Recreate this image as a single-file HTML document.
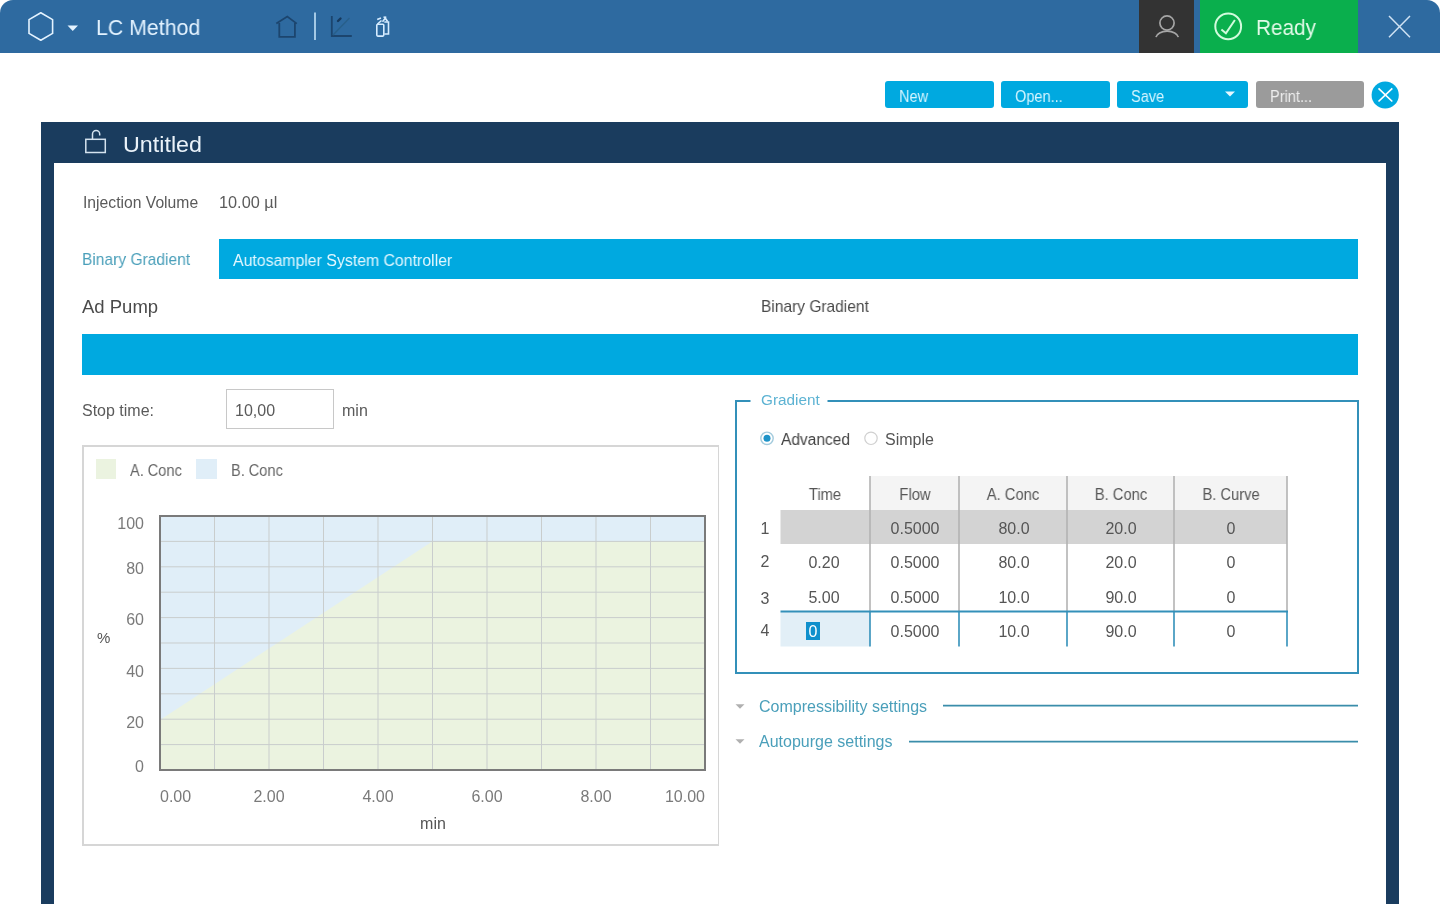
<!DOCTYPE html>
<html><head><meta charset="utf-8">
<style>
*{box-sizing:border-box;margin:0;padding:0}
html,body{width:1440px;height:904px;overflow:hidden;background:#fff;font-family:"Liberation Sans",sans-serif;color:#555555}
.a{position:absolute;white-space:nowrap;will-change:transform}
</style></head><body>
<div class="a" style="left:0;top:0;width:1440px;height:53px;background:#2e6aa0;border-radius:13px 13px 0 0"></div>
<svg class="a" style="left:0;top:0" width="1440" height="53" viewBox="0 0 1440 53"><path d="M40.8 12.8 L52.6 19.6 L52.6 33.4 L40.8 40.2 L29 33.4 L29 19.6 Z" fill="none" stroke="#e4f3ff" stroke-width="1.6" stroke-linejoin="round"/><path d="M67.5 25.5 H78 L72.75 31 Z" fill="#e4f3ff"/><path d="M276.3 23.6 L287.3 16.6 L296.8 23.6 M279.3 22.9 V36.8 H294.9 V22.9" fill="none" stroke="#1c456e" stroke-width="1.8"/><line x1="315" y1="12.5" x2="315" y2="40" stroke="#cdeafc" stroke-width="1.5"/><path d="M331.8 16 V36 H351.8" fill="none" stroke="#1c456e" stroke-width="1.8"/><path d="M333 35 L349.5 18" fill="none" stroke="#285f8a" stroke-width="1.4"/><path d="M338 21 L340.5 18.5" fill="none" stroke="#173a5e" stroke-width="2.4" stroke-linecap="round"/><path d="M384.3 22 H388.5 V34 H384.3" fill="none" stroke="#d6ecff" stroke-width="1.6"/><path d="M382.5 21.8 L385.3 18.2 L387.6 21.5" fill="none" stroke="#d6ecff" stroke-width="1.6"/><path d="M383.5 17.2 L386.3 17.2" fill="none" stroke="#d6ecff" stroke-width="1.6"/><rect x="376.8" y="24.3" width="7" height="11.8" rx="1" fill="none" stroke="#d6ecff" stroke-width="1.6"/><path d="M377.5 24 L381.5 20.5 M377.2 19.5 L381 18" fill="none" stroke="#d6ecff" stroke-width="1.6"/></svg>
<div class="a" style="left:95.80px;top:15.18px;font-size:22px;line-height:26.40px;color:#e4f3ff;transform:scaleX(0.968);transform-origin:0 0;">LC Method</div>
<div class="a" style="left:1139px;top:0;width:55px;height:53px;background:#333333"></div>
<div class="a" style="left:1200px;top:0;width:158px;height:53px;background:#0aaf4d"></div>
<svg class="a" style="left:1100px;top:0" width="340" height="53" viewBox="1100 0 340 53"><circle cx="1167" cy="23" r="7.1" fill="none" stroke="#a6a6a6" stroke-width="1.7"/><path d="M1156 37.2 A11.2 6.6 0 0 1 1178.3 37.2" fill="none" stroke="#a6a6a6" stroke-width="1.7"/><circle cx="1228.2" cy="26.4" r="12.9" fill="none" stroke="#d2fbdd" stroke-width="2"/><path d="M1221.4 29.6 L1225.9 33.3 L1234.9 20" fill="none" stroke="#d2fbdd" stroke-width="2"/><path d="M1389 16 L1410 37.3 M1410 16 L1389 37.3" stroke="#cfe2f3" stroke-width="1.5"/></svg>
<div class="a" style="left:1256.00px;top:13.92px;font-size:22.8px;line-height:27.36px;color:#e2fae8;transform:scaleX(0.91);transform-origin:0 0;">Ready</div>
<div class="a" style="left:885px;top:81px;width:109px;height:27px;border-radius:3px;background:#00a9e0"></div>
<div class="a" style="left:899.00px;top:86.86px;font-size:16px;line-height:19.20px;color:#d5f5ff;transform:scaleX(0.91);transform-origin:0 0;">New</div>
<div class="a" style="left:1001px;top:81px;width:109px;height:27px;border-radius:3px;background:#00a9e0"></div>
<div class="a" style="left:1015.00px;top:86.86px;font-size:16px;line-height:19.20px;color:#d5f5ff;transform:scaleX(0.91);transform-origin:0 0;">Open...</div>
<div class="a" style="left:1117px;top:81px;width:131px;height:27px;border-radius:3px;background:#00a9e0"></div>
<div class="a" style="left:1131.00px;top:86.86px;font-size:16px;line-height:19.20px;color:#d5f5ff;transform:scaleX(0.91);transform-origin:0 0;">Save</div>
<div class="a" style="left:1256px;top:81px;width:108px;height:27px;border-radius:3px;background:#9b9b9b"></div>
<div class="a" style="left:1270.00px;top:86.86px;font-size:16px;line-height:19.20px;color:#eeeeee;transform:scaleX(0.91);transform-origin:0 0;">Print...</div>
<svg class="a" style="left:1100px;top:70px" width="340" height="50" viewBox="1100 70 340 50"><path d="M1225 91.5 H1235 L1230 96.5 Z" fill="#e6f8ff"/><circle cx="1385.2" cy="95" r="13.6" fill="#00a9e0"/><path d="M1378.5 88.3 L1392.3 101.5 M1392.3 88.3 L1378.5 101.5" stroke="#fff" stroke-width="1.7"/></svg>
<div class="a" style="left:41px;top:122px;width:1358px;height:790px;background:#1a3c5e"></div>
<div class="a" style="left:54px;top:163px;width:1332px;height:750px;background:#fff"></div>
<svg class="a" style="left:80px;top:125px" width="30" height="32" viewBox="80 125 30 32"><rect x="85.8" y="139.3" width="19.5" height="13.2" fill="none" stroke="#d5e3ef" stroke-width="1.5"/><path d="M92.5 139 V134 A3.6 3.6 0 0 1 99.7 134 V135.5" fill="none" stroke="#d5e3ef" stroke-width="1.5"/></svg>
<div class="a" style="left:122.50px;top:130.50px;font-size:22.5px;line-height:27.00px;color:#eaf2f9;transform:scaleX(1.035);transform-origin:0 0;">Untitled</div>
<div class="a" style="left:82.50px;top:193.64px;font-size:15.7px;line-height:18.84px;color:#5a5a5a;transform-origin:0 0;">Injection Volume</div>
<div class="a" style="left:218.50px;top:193.07px;font-size:16.3px;line-height:19.56px;color:#5a5a5a;transform-origin:0 0;">10.00 µl</div>
<div class="a" style="left:82.30px;top:249.71px;font-size:17px;line-height:20.40px;color:#4a9fba;transform:scaleX(0.915);transform-origin:0 0;">Binary Gradient</div>
<div class="a" style="left:219px;top:239px;width:1139px;height:40px;background:#00a9e0"></div>
<div class="a" style="left:232.50px;top:251.06px;font-size:16px;line-height:19.20px;color:#e4f8ff;transform:scaleX(0.99);transform-origin:0 0;">Autosampler System Controller</div>
<div class="a" style="left:82.00px;top:295.99px;font-size:18.5px;line-height:22.20px;color:#4a4a4a;transform-origin:0 0;">Ad Pump</div>
<div class="a" style="left:760.50px;top:297.49px;font-size:16.6px;line-height:19.92px;color:#4a4a4a;transform:scaleX(0.935);transform-origin:0 0;">Binary Gradient</div>
<div class="a" style="left:82px;top:334px;width:1276px;height:41px;background:#00a9e0"></div>
<div class="a" style="left:82.00px;top:400.86px;font-size:16px;line-height:19.20px;color:#5a5a5a;transform-origin:0 0;">Stop time:</div>
<div class="a" style="left:226px;top:389px;width:108px;height:40px;border:1px solid #c8c8c8"></div>
<div class="a" style="left:235.00px;top:400.86px;font-size:16px;line-height:19.20px;color:#5a5a5a;transform-origin:0 0;">10,00</div>
<div class="a" style="left:342.00px;top:400.86px;font-size:16px;line-height:19.20px;color:#5a5a5a;transform-origin:0 0;">min</div>
<div class="a" style="left:82px;top:445px;width:637px;height:401px;border:2px solid #d6d6d6;border-width:2px 1px 2px 2px"></div>
<svg class="a" style="left:0;top:0" width="1440" height="904" viewBox="0 0 1440 904">
<rect x="160" y="516" width="545" height="254" fill="#e0eef8"/>
<polygon points="160,720 433,541 705,541 705,770 160,770" fill="#ebf3e0"/>
<line x1="214.5" y1="516" x2="214.5" y2="770" stroke="#c9cdcd" stroke-width="1"/>
<line x1="269.0" y1="516" x2="269.0" y2="770" stroke="#c9cdcd" stroke-width="1"/>
<line x1="323.5" y1="516" x2="323.5" y2="770" stroke="#c9cdcd" stroke-width="1"/>
<line x1="378.0" y1="516" x2="378.0" y2="770" stroke="#c9cdcd" stroke-width="1"/>
<line x1="432.5" y1="516" x2="432.5" y2="770" stroke="#c9cdcd" stroke-width="1"/>
<line x1="487.0" y1="516" x2="487.0" y2="770" stroke="#c9cdcd" stroke-width="1"/>
<line x1="541.5" y1="516" x2="541.5" y2="770" stroke="#c9cdcd" stroke-width="1"/>
<line x1="596.0" y1="516" x2="596.0" y2="770" stroke="#c9cdcd" stroke-width="1"/>
<line x1="650.5" y1="516" x2="650.5" y2="770" stroke="#c9cdcd" stroke-width="1"/>
<line x1="160" y1="541.4" x2="705" y2="541.4" stroke="#c9cdcd" stroke-width="1"/>
<line x1="160" y1="566.8" x2="705" y2="566.8" stroke="#c9cdcd" stroke-width="1"/>
<line x1="160" y1="592.2" x2="705" y2="592.2" stroke="#c9cdcd" stroke-width="1"/>
<line x1="160" y1="617.6" x2="705" y2="617.6" stroke="#c9cdcd" stroke-width="1"/>
<line x1="160" y1="643.0" x2="705" y2="643.0" stroke="#c9cdcd" stroke-width="1"/>
<line x1="160" y1="668.4" x2="705" y2="668.4" stroke="#c9cdcd" stroke-width="1"/>
<line x1="160" y1="693.8" x2="705" y2="693.8" stroke="#c9cdcd" stroke-width="1"/>
<line x1="160" y1="719.2" x2="705" y2="719.2" stroke="#c9cdcd" stroke-width="1"/>
<line x1="160" y1="744.6" x2="705" y2="744.6" stroke="#c9cdcd" stroke-width="1"/>
<rect x="160" y="516" width="545" height="254" fill="none" stroke="#7a7a7a" stroke-width="2"/>
<rect x="96" y="459" width="20" height="20" fill="#ebf3e0"/>
<rect x="196" y="459" width="21" height="20" fill="#e0eef8"/>
<path d="M750.5 401 H736 V673 H1358 V401 H827.5" fill="none" stroke="#3390b9" stroke-width="2"/>
<circle cx="767" cy="438.3" r="6.2" fill="#fff" stroke="#a3cbdd" stroke-width="1.4"/>
<circle cx="767" cy="438.3" r="3.5" fill="#1d93c8"/>
<circle cx="871" cy="438.3" r="6.2" fill="#fff" stroke="#d0d0d0" stroke-width="1.2"/>
<rect x="870" y="476" width="417" height="34" fill="#f4f4f4"/>
<rect x="780.5" y="510" width="506.5" height="34" fill="#d3d3d3"/>
<rect x="780.5" y="612" width="89.5" height="34.5" fill="#e2eff7"/>
<line x1="870" y1="476" x2="870" y2="611" stroke="#b3b3b3" stroke-width="1.6"/>
<line x1="870" y1="611" x2="870" y2="646.5" stroke="#3390b9" stroke-width="1.6"/>
<line x1="959" y1="476" x2="959" y2="611" stroke="#b3b3b3" stroke-width="1.6"/>
<line x1="959" y1="611" x2="959" y2="646.5" stroke="#3390b9" stroke-width="1.6"/>
<line x1="1067" y1="476" x2="1067" y2="611" stroke="#b3b3b3" stroke-width="1.6"/>
<line x1="1067" y1="611" x2="1067" y2="646.5" stroke="#3390b9" stroke-width="1.6"/>
<line x1="1174" y1="476" x2="1174" y2="611" stroke="#b3b3b3" stroke-width="1.6"/>
<line x1="1174" y1="611" x2="1174" y2="646.5" stroke="#3390b9" stroke-width="1.6"/>
<line x1="1287" y1="476" x2="1287" y2="611" stroke="#b3b3b3" stroke-width="1.6"/>
<line x1="1287" y1="611" x2="1287" y2="646.5" stroke="#3390b9" stroke-width="1.6"/>
<line x1="780.5" y1="611.5" x2="1288" y2="611.5" stroke="#3390b9" stroke-width="1.8"/>
<rect x="806" y="622" width="14" height="18" fill="#1090cc"/>
<path d="M735.5 704.2 H744.5 L740 708.7 Z" fill="#b0b0b0"/>
<path d="M735.5 739.2 H744.5 L740 743.7 Z" fill="#b0b0b0"/>
<line x1="943" y1="705.6" x2="1358" y2="705.6" stroke="#3a8daa" stroke-width="1.7"/>
<line x1="909" y1="741.6" x2="1358" y2="741.6" stroke="#3a8daa" stroke-width="1.7"/>
</svg>
<div class="a" style="left:130.00px;top:460.86px;font-size:16px;line-height:19.20px;color:#666;transform:scaleX(0.91);transform-origin:0 0;">A. Conc</div>
<div class="a" style="left:231.00px;top:460.86px;font-size:16px;line-height:19.20px;color:#666;transform:scaleX(0.91);transform-origin:0 0;">B. Conc</div>
<div class="a" style="left:-456.00px;width:600px;text-align:right;top:514.36px;font-size:16px;line-height:19.20px;color:#7a7a7a;transform-origin:100% 0;">100</div>
<div class="a" style="left:-456.00px;width:600px;text-align:right;top:558.86px;font-size:16px;line-height:19.20px;color:#7a7a7a;transform-origin:100% 0;">80</div>
<div class="a" style="left:-456.00px;width:600px;text-align:right;top:610.36px;font-size:16px;line-height:19.20px;color:#7a7a7a;transform-origin:100% 0;">60</div>
<div class="a" style="left:-456.00px;width:600px;text-align:right;top:661.86px;font-size:16px;line-height:19.20px;color:#7a7a7a;transform-origin:100% 0;">40</div>
<div class="a" style="left:-456.00px;width:600px;text-align:right;top:712.86px;font-size:16px;line-height:19.20px;color:#7a7a7a;transform-origin:100% 0;">20</div>
<div class="a" style="left:-456.00px;width:600px;text-align:right;top:756.86px;font-size:16px;line-height:19.20px;color:#7a7a7a;transform-origin:100% 0;">0</div>
<div class="a" style="left:97.00px;top:629.30px;font-size:15px;line-height:18.00px;color:#555;transform-origin:0 0;">%</div>
<div class="a" style="left:159.50px;top:786.86px;font-size:16px;line-height:19.20px;color:#7a7a7a;transform-origin:0 0;">0.00</div>
<div class="a" style="left:-31.50px;width:600px;text-align:center;top:786.86px;font-size:16px;line-height:19.20px;color:#7a7a7a;transform-origin:50% 0;">2.00</div>
<div class="a" style="left:77.50px;width:600px;text-align:center;top:786.86px;font-size:16px;line-height:19.20px;color:#7a7a7a;transform-origin:50% 0;">4.00</div>
<div class="a" style="left:187.00px;width:600px;text-align:center;top:786.86px;font-size:16px;line-height:19.20px;color:#7a7a7a;transform-origin:50% 0;">6.00</div>
<div class="a" style="left:296.00px;width:600px;text-align:center;top:786.86px;font-size:16px;line-height:19.20px;color:#7a7a7a;transform-origin:50% 0;">8.00</div>
<div class="a" style="left:105.00px;width:600px;text-align:right;top:786.86px;font-size:16px;line-height:19.20px;color:#7a7a7a;transform-origin:100% 0;">10.00</div>
<div class="a" style="left:132.50px;width:600px;text-align:center;top:814.36px;font-size:16px;line-height:19.20px;color:#555;transform-origin:50% 0;">min</div>
<div class="a" style="left:760.80px;top:391.32px;font-size:15.3px;line-height:18.36px;color:#5db3d3;transform-origin:0 0;">Gradient</div>
<div class="a" style="left:781.00px;top:430.46px;font-size:16px;line-height:19.20px;color:#444;transform:scaleX(0.97);transform-origin:0 0;">Advanced</div>
<div class="a" style="left:885.00px;top:430.46px;font-size:16px;line-height:19.20px;color:#555;transform-origin:0 0;">Simple</div>
<div class="a" style="left:525.00px;width:600px;text-align:center;top:484.86px;font-size:16px;line-height:19.20px;color:#555;transform:scaleX(0.92);transform-origin:50% 0;">Time</div>
<div class="a" style="left:615.00px;width:600px;text-align:center;top:484.86px;font-size:16px;line-height:19.20px;color:#555;transform:scaleX(0.92);transform-origin:50% 0;">Flow</div>
<div class="a" style="left:713.00px;width:600px;text-align:center;top:484.86px;font-size:16px;line-height:19.20px;color:#555;transform:scaleX(0.92);transform-origin:50% 0;">A. Conc</div>
<div class="a" style="left:820.50px;width:600px;text-align:center;top:484.86px;font-size:16px;line-height:19.20px;color:#555;transform:scaleX(0.92);transform-origin:50% 0;">B. Conc</div>
<div class="a" style="left:931.00px;width:600px;text-align:center;top:484.86px;font-size:16px;line-height:19.20px;color:#555;transform:scaleX(0.92);transform-origin:50% 0;">B. Curve</div>
<div class="a" style="left:464.50px;width:600px;text-align:center;top:518.86px;font-size:16px;line-height:19.20px;color:#555;transform-origin:50% 0;">1</div>
<div class="a" style="left:464.50px;width:600px;text-align:center;top:552.16px;font-size:16px;line-height:19.20px;color:#555;transform-origin:50% 0;">2</div>
<div class="a" style="left:464.50px;width:600px;text-align:center;top:588.86px;font-size:16px;line-height:19.20px;color:#555;transform-origin:50% 0;">3</div>
<div class="a" style="left:464.50px;width:600px;text-align:center;top:621.36px;font-size:16px;line-height:19.20px;color:#555;transform-origin:50% 0;">4</div>
<div class="a" style="left:615.30px;width:600px;text-align:center;top:519.16px;font-size:16px;line-height:19.20px;color:#555;transform-origin:50% 0;">0.5000</div>
<div class="a" style="left:713.50px;width:600px;text-align:center;top:519.16px;font-size:16px;line-height:19.20px;color:#555;transform-origin:50% 0;">80.0</div>
<div class="a" style="left:820.50px;width:600px;text-align:center;top:519.16px;font-size:16px;line-height:19.20px;color:#555;transform-origin:50% 0;">20.0</div>
<div class="a" style="left:930.50px;width:600px;text-align:center;top:519.16px;font-size:16px;line-height:19.20px;color:#555;transform-origin:50% 0;">0</div>
<div class="a" style="left:524.00px;width:600px;text-align:center;top:553.46px;font-size:16px;line-height:19.20px;color:#555;transform-origin:50% 0;">0.20</div>
<div class="a" style="left:615.30px;width:600px;text-align:center;top:553.46px;font-size:16px;line-height:19.20px;color:#555;transform-origin:50% 0;">0.5000</div>
<div class="a" style="left:713.50px;width:600px;text-align:center;top:553.46px;font-size:16px;line-height:19.20px;color:#555;transform-origin:50% 0;">80.0</div>
<div class="a" style="left:820.50px;width:600px;text-align:center;top:553.46px;font-size:16px;line-height:19.20px;color:#555;transform-origin:50% 0;">20.0</div>
<div class="a" style="left:930.50px;width:600px;text-align:center;top:553.46px;font-size:16px;line-height:19.20px;color:#555;transform-origin:50% 0;">0</div>
<div class="a" style="left:524.00px;width:600px;text-align:center;top:587.76px;font-size:16px;line-height:19.20px;color:#555;transform-origin:50% 0;">5.00</div>
<div class="a" style="left:615.30px;width:600px;text-align:center;top:587.76px;font-size:16px;line-height:19.20px;color:#555;transform-origin:50% 0;">0.5000</div>
<div class="a" style="left:713.50px;width:600px;text-align:center;top:587.76px;font-size:16px;line-height:19.20px;color:#555;transform-origin:50% 0;">10.0</div>
<div class="a" style="left:820.50px;width:600px;text-align:center;top:587.76px;font-size:16px;line-height:19.20px;color:#555;transform-origin:50% 0;">90.0</div>
<div class="a" style="left:930.50px;width:600px;text-align:center;top:587.76px;font-size:16px;line-height:19.20px;color:#555;transform-origin:50% 0;">0</div>
<div class="a" style="left:513.00px;width:600px;text-align:center;top:621.76px;font-size:16px;line-height:19.20px;color:#fff;transform-origin:50% 0;">0</div>
<div class="a" style="left:615.30px;width:600px;text-align:center;top:621.76px;font-size:16px;line-height:19.20px;color:#555;transform-origin:50% 0;">0.5000</div>
<div class="a" style="left:713.50px;width:600px;text-align:center;top:621.76px;font-size:16px;line-height:19.20px;color:#555;transform-origin:50% 0;">10.0</div>
<div class="a" style="left:820.50px;width:600px;text-align:center;top:621.76px;font-size:16px;line-height:19.20px;color:#555;transform-origin:50% 0;">90.0</div>
<div class="a" style="left:930.50px;width:600px;text-align:center;top:621.76px;font-size:16px;line-height:19.20px;color:#555;transform-origin:50% 0;">0</div>
<div class="a" style="left:759.00px;top:696.86px;font-size:16px;line-height:19.20px;color:#4a9fba;transform-origin:0 0;">Compressibility settings</div>
<div class="a" style="left:759.00px;top:731.86px;font-size:16px;line-height:19.20px;color:#4a9fba;transform-origin:0 0;">Autopurge settings</div>
</body></html>
